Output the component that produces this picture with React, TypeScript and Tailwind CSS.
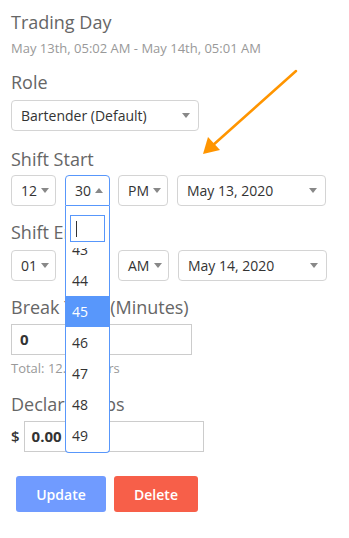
import React from 'react';

const Caret = ({ up = false }: { up?: boolean }) => (
  <span
    className={
      up
        ? 'inline-block w-0 h-0 border-x-[4px] border-x-transparent border-b-[5px] border-b-[#888]'
        : 'inline-block w-0 h-0 border-x-[4px] border-x-transparent border-t-[5px] border-t-[#888]'
    }
  />
);

function Select({ value, className = '' }: { value: string; className?: string }) {
  return (
    <div
      className={`h-[31px] flex items-center justify-between pl-[9px] pr-[6px] border border-[#d4d4d4] rounded-[4px] bg-white text-[14px] text-[#333] ${className}`}
    >
      <span>{value}</span>
      <Caret />
    </div>
  );
}

function Label({ children }: { children: React.ReactNode }) {
  return <div className="text-[18px] leading-[24px] text-[#666]">{children}</div>;
}

export default function App() {
  const minutes = ['43', '44', '45', '46', '47', '48', '49'];

  return (
    <div
      className="relative w-[349px] h-[538px] bg-white overflow-hidden"
      style={{ fontFamily: '"Open Sans", sans-serif' }}
    >
      <div className="px-[11px] pt-[9px]">
        <div className="text-[18px] leading-[26px] text-[#666]">Trading Day</div>
        <div className="mt-[5px] text-[13px] leading-[16px] text-[#999]">
          May 13th, 05:02 AM - May 14th, 05:01 AM
        </div>

        <div className="mt-[14px]">
          <Label>Role</Label>
          <Select value="Bartender (Default)" className="mt-[6px] w-[188px] pr-[8px]" />
        </div>

        <div className="mt-[16px]">
          <Label>Shift Start</Label>
          <div className="mt-[4px] flex items-center">
            <Select value="12" className="w-[45px]" />
            <div className="relative ml-[9px]">
              <div className="h-[31px] w-[45px] flex items-center justify-between pl-[9px] pr-[6px] border border-[#5897fb] rounded-t-[4px] bg-white text-[14px] text-[#333]">
                <span>30</span>
                <Caret up />
              </div>
              <div className="absolute z-10 left-0 top-[31px] w-[45px] h-[247px] border border-t-0 border-[#5897fb] rounded-b-[4px] bg-white overflow-hidden">
                <ul className="absolute left-0 right-0 top-[28px]">
                  {minutes.map((m) => (
                    <li
                      key={m}
                      className={
                        m === '45'
                          ? 'h-[31px] pl-[6px] flex items-center bg-[#5897fb] text-white text-[14px]'
                          : 'h-[31px] pl-[6px] flex items-center text-[#333] text-[14px]'
                      }
                    >
                      {m}
                    </li>
                  ))}
                </ul>
                <div className="absolute left-0 right-0 top-0 h-[42px] bg-white px-[4px] pt-[9px]">
                  <div className="h-[27px] border border-[#5897fb] flex items-center pl-[5px]">
                    <span className="w-px h-[16px] bg-[#333]" />
                  </div>
                </div>
              </div>
            </div>
            <Select value="PM" className="ml-[8px] w-[50px]" />
            <Select value="May 13, 2020" className="ml-[9px] w-[149px] pr-[8px]" />
          </div>
        </div>

        <div className="mt-[14px]">
          <Label>Shift End</Label>
          <div className="mt-[6px] flex items-center">
            <Select value="01" className="w-[45px]" />
            <Select value="00" className="ml-[9px] w-[45px]" />
            <Select value="AM" className="ml-[8px] w-[51px]" />
            <Select value="May 14, 2020" className="ml-[9px] w-[149px] pr-[8px]" />
          </div>
        </div>

        <div className="mt-[14px]">
          <Label>Break Time (Minutes)</Label>
          <div className="mt-[5px] w-[181px] h-[31px] border border-[#ccc] flex items-center pl-[8px] text-[15px] font-bold text-[#333]">
            0
          </div>
          <div className="mt-[5px] text-[13px] leading-[16px] text-[#999]">Total: 12.50 hours</div>
        </div>

        <div className="mt-[16px]">
          <Label>Declared Tips</Label>
          <div className="mt-[5px] flex items-center">
            <span className="text-[15px] font-semibold text-[#333] mr-[4px]">$</span>
            <div className="w-[180px] h-[31px] border border-[#ccc] flex items-center pl-[7px] text-[15px] font-bold text-[#333]">
              0.00
            </div>
          </div>
        </div>

        <div className="mt-[24px] ml-[5px] flex gap-[8px]">
          <button className="w-[90px] h-[36px] rounded-[3px] bg-[#709bff] text-white text-[14px] font-semibold">
            Update
          </button>
          <button className="w-[84px] h-[36px] rounded-[3px] bg-[#f75f49] text-white text-[14px] font-semibold">
            Delete
          </button>
        </div>
      </div>

      <svg className="absolute left-0 top-0 pointer-events-none" width="349" height="538">
        <line x1="296" y1="71" x2="212" y2="146" stroke="#ff9500" strokeWidth="2.5" strokeLinecap="round" />
        <polygon points="203,154 208,137 220,150" fill="#ff9500" />
      </svg>
    </div>
  );
}
